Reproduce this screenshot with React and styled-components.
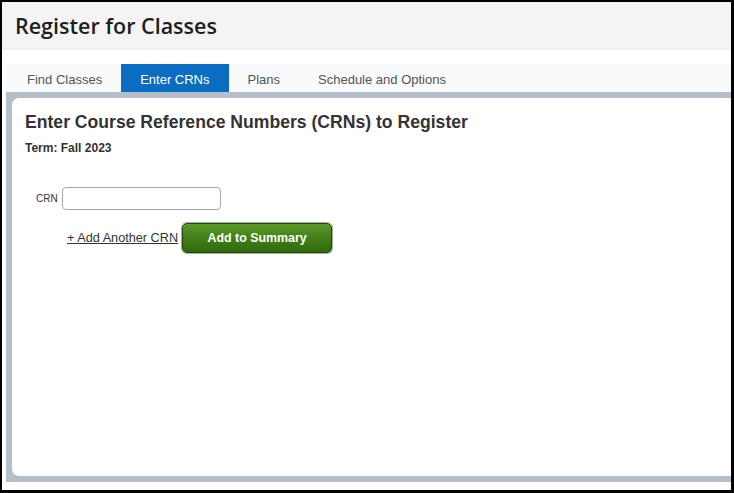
import React from 'react';
import styled, { createGlobalStyle } from 'styled-components';

const GlobalStyle = createGlobalStyle`
  html, body {
    margin: 0;
    padding: 0;
    background: #fff;
  }
  * {
    box-sizing: border-box;
  }
`;

const Frame = styled.div`
  width: 734px;
  height: 493px;
  border: 2px solid #000;
  border-right-width: 3px;
  border-bottom-width: 3px;
  background: #fff;
  display: flex;
  flex-direction: column;
  overflow: hidden;
  font-family: "Liberation Sans", Arial, sans-serif;
`;

const Header = styled.header`
  height: 48px;
  background: #f4f4f4;
  border-bottom: 1px solid #ececec;
  display: flex;
  align-items: center;
  padding-left: 13px;
`;

const PageTitle = styled.h1`
  margin: 0;
  font-family: "Open Sans", "Noto Sans", sans-serif;
  font-weight: 600;
  font-size: 21.5px;
  color: #1e1e1e;
`;

const TabBar = styled.nav`
  margin-top: 14px;
  margin-left: 4px;
  height: 28px;
  background: #f8fafc;
  display: flex;
  padding-left: 2px;
`;

const Tab = styled.div`
  padding: 2px 19px 0;
  display: flex;
  align-items: center;
  font-size: 13px;
  color: ${(p) => (p.$active ? '#fff' : '#555')};
  background: ${(p) => (p.$active ? '#0b6dc1' : 'transparent')};
  cursor: pointer;
`;

const Shell = styled.div`
  margin-left: 4px;
  height: 390px;
  background: #b5bfc9;
  padding: 6px 0 6px 6px;
  display: flex;
`;

const Panel = styled.section`
  flex: 1;
  background: #fff;
  border-radius: 7px 0 0 7px;
  padding: 14px 13px;
  display: flex;
  flex-direction: column;
`;

const Heading = styled.h2`
  margin: 0;
  font-size: 17.6px;
  font-weight: 700;
  color: #333;
  line-height: 20px;
`;

const Term = styled.div`
  margin-top: 9px;
  font-size: 12px;
  font-weight: 700;
  color: #333;
  line-height: 14px;
`;

const CrnRow = styled.div`
  margin-top: 32px;
  padding-left: 11px;
  display: flex;
  align-items: center;
  gap: 4px;
`;

const Label = styled.label`
  font-size: 10px;
  color: #333;
`;

const CrnInput = styled.input`
  width: 159px;
  height: 23px;
  border: 1px solid #a8a8a8;
  border-radius: 4px;
  padding: 0 5px;
  font-family: inherit;
  font-size: 12px;
  outline: none;
`;

const ActionRow = styled.div`
  margin-top: 11px;
  padding-left: 42px;
  display: flex;
  align-items: center;
  gap: 4px;
`;

const AddLink = styled.a`
  font-size: 12.7px;
  color: #333;
  text-decoration: underline;
  margin-top: 2px;
  cursor: pointer;
`;

const SummaryButton = styled.button`
  width: 150px;
  height: 30px;
  margin-top: 2px;
  border-radius: 5px;
  border: 1px solid #24460f;
  box-shadow: 0 0 0 1px #a7b0a0;
  background: linear-gradient(#5a9a28, #3f7d17 55%, #2f6a0c);
  color: #fff;
  font-family: inherit;
  font-weight: 700;
  font-size: 12.4px;
  cursor: pointer;
`;

const tabs = ['Find Classes', 'Enter CRNs', 'Plans', 'Schedule and Options'];

export default function App() {
  return (
    <>
      <GlobalStyle />
      <Frame>
        <Header>
          <PageTitle>Register for Classes</PageTitle>
        </Header>
        <TabBar>
          {tabs.map((t) => (
            <Tab key={t} $active={t === 'Enter CRNs'}>
              {t}
            </Tab>
          ))}
        </TabBar>
        <Shell>
          <Panel>
            <Heading>Enter Course Reference Numbers (CRNs) to Register</Heading>
            <Term>Term: Fall 2023</Term>
            <CrnRow>
              <Label htmlFor="crn">CRN</Label>
              <CrnInput id="crn" type="text" />
            </CrnRow>
            <ActionRow>
              <AddLink>+ Add Another CRN</AddLink>
              <SummaryButton>Add to Summary</SummaryButton>
            </ActionRow>
          </Panel>
        </Shell>
      </Frame>
    </>
  );
}
